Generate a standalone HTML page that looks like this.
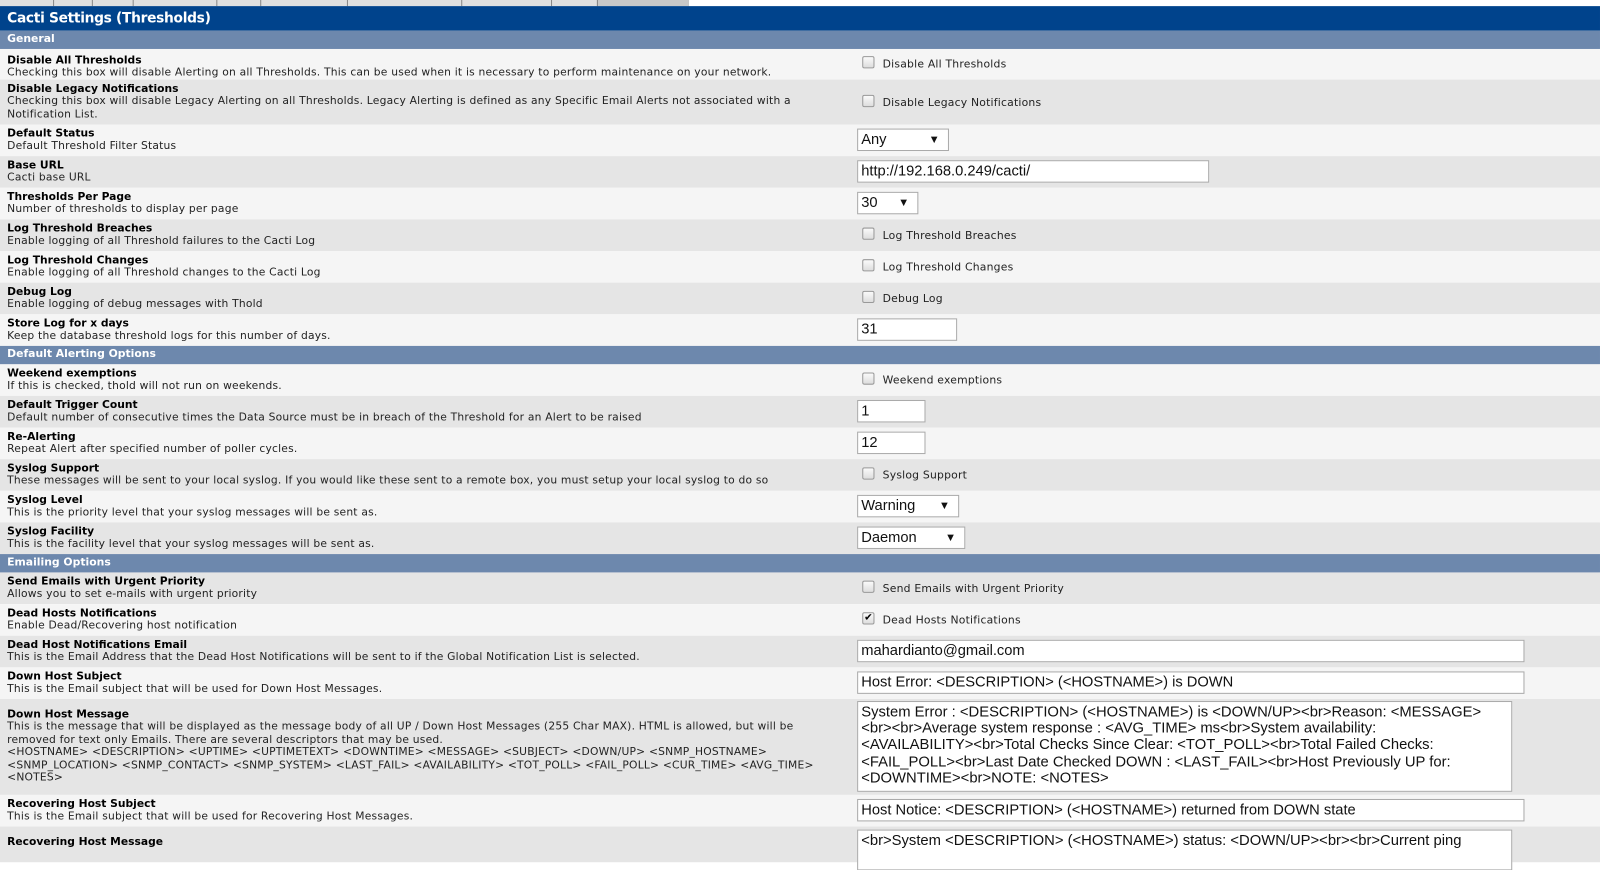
<!DOCTYPE html>
<html><head><meta charset="utf-8"><style>
*{box-sizing:border-box;margin:0;padding:0}
html,body{width:1600px;height:845px;overflow:hidden;background:#fff}
#w{position:absolute;left:0;top:0;width:1568px;height:829px;transform:scale(1.0204);transform-origin:0 0;font-family:"DejaVu Sans",Verdana,sans-serif}
.tabs{position:absolute;left:0;top:0;width:675px;height:6px;background:#e0e0e0;border-right:1px solid #999}
.tabs i{position:absolute;top:0;height:6px;border-left:1px solid #888}
.hdr{position:absolute;left:0;top:6px;width:1568px;height:24px;background:#00438c;color:#fff;font-weight:bold;font-size:13.5px;padding:4px 7px;letter-spacing:-0.3px}
.sec{position:absolute;left:0;width:1568px;height:18px;background:#6d88ad;color:#fff;font-weight:bold;font-size:10.6px;padding:2px 7px}
.r{position:absolute;left:0;width:1568px;background:#f5f5f5}
.r.d{background:#e5e5e5}
.l{position:absolute;left:7px;top:5px;width:830px;font-size:10.5px;line-height:12.4px;color:#000;letter-spacing:0.2px}
.l b{display:block;font-weight:bold;letter-spacing:0}
.l span{color:#222}
.cb{position:absolute;left:845px;width:12px;height:12px;border:1px solid #999;border-radius:2px;background:linear-gradient(#fafafa,#ddd)}
.cl{position:absolute;left:865px;font-size:10.6px;color:#222;letter-spacing:0.2px}
.in{position:absolute;left:840px;height:22px;border:1px solid #aaa;background:#fff;font-family:"Liberation Sans",Arial,sans-serif;font-size:14.4px;padding:2px 3px;color:#111;white-space:nowrap;overflow:hidden}
.sel::after{content:"▼";position:absolute;right:8px;top:4px;font-size:11px}
.ta{position:absolute;left:840px;width:642px;border:1px solid #aaa;background:#fff;font-family:"Liberation Sans",Arial,sans-serif;font-size:14.5px;line-height:16.2px;padding:2px 3px;color:#111;overflow:hidden;white-space:nowrap}
</style></head><body><div id="w">
<div class="tabs"><i style="left:52px"></i><i style="left:90px"></i><i style="left:130px"></i><i style="left:212px"></i><i style="left:255px"></i><i style="left:340px"></i><i style="left:452px"></i><i style="left:540px"></i><i style="left:585px"></i><i style="left:585px;width:90px;background:#c8c8c8"></i></div>
<div class="hdr">Cacti Settings (Thresholds)</div>
<div class="sec" style="top:30px">General</div>

<div class="r" style="top:48px;height:30px"><div class="l"><b>Disable All Thresholds</b><span>Checking this box will disable Alerting on all Thresholds. This can be used when it is necessary to perform maintenance on your network.</span></div><div class="cb" style="top:7px"></div><div class="cl" style="top:9px">Disable All Thresholds</div></div>
<div class="r d" style="top:78px;height:44px"><div class="l" style="top:3px"><b>Disable Legacy Notifications</b><span>Checking this box will disable Legacy Alerting on all Thresholds. Legacy Alerting is defined as any Specific Email Alerts not associated with a<br>Notification List.</span></div><div class="cb" style="top:15px"></div><div class="cl" style="top:17px">Disable Legacy Notifications</div></div>
<div class="r" style="top:122px;height:31px"><div class="l" style="top:3px"><b>Default Status</b><span>Default Threshold Filter Status</span></div><div class="in sel" style="top:4px;width:90px">Any</div></div>
<div class="r d" style="top:153px;height:31px"><div class="l" style="top:3px"><b>Base URL</b><span>Cacti base URL</span></div><div class="in" style="top:4px;width:345px">http://192.168.0.249/cacti/</div></div>
<div class="r" style="top:184px;height:31px"><div class="l" style="top:3px"><b>Thresholds Per Page</b><span>Number of thresholds to display per page</span></div><div class="in sel" style="top:4px;width:60px">30</div></div>
<div class="r d" style="top:215px;height:31px"><div class="l" style="top:3px"><b>Log Threshold Breaches</b><span>Enable logging of all Threshold failures to the Cacti Log</span></div><div class="cb" style="top:8px"></div><div class="cl" style="top:10px">Log Threshold Breaches</div></div>
<div class="r" style="top:246px;height:31px"><div class="l" style="top:3px"><b>Log Threshold Changes</b><span>Enable logging of all Threshold changes to the Cacti Log</span></div><div class="cb" style="top:8px"></div><div class="cl" style="top:10px">Log Threshold Changes</div></div>
<div class="r d" style="top:277px;height:31px"><div class="l" style="top:3px"><b>Debug Log</b><span>Enable logging of debug messages with Thold</span></div><div class="cb" style="top:8px"></div><div class="cl" style="top:10px">Debug Log</div></div>
<div class="r" style="top:308px;height:31px"><div class="l" style="top:3px"><b>Store Log for x days</b><span>Keep the database threshold logs for this number of days.</span></div><div class="in" style="top:4px;width:98px">31</div></div>

<div class="sec" style="top:339px">Default Alerting Options</div>
<div class="r" style="top:357px;height:31px"><div class="l" style="top:3px"><b>Weekend exemptions</b><span>If this is checked, thold will not run on weekends.</span></div><div class="cb" style="top:8px"></div><div class="cl" style="top:10px">Weekend exemptions</div></div>
<div class="r d" style="top:388px;height:31px"><div class="l" style="top:3px"><b>Default Trigger Count</b><span>Default number of consecutive times the Data Source must be in breach of the Threshold for an Alert to be raised</span></div><div class="in" style="top:4px;width:67px">1</div></div>
<div class="r" style="top:419px;height:31px"><div class="l" style="top:3px"><b>Re-Alerting</b><span>Repeat Alert after specified number of poller cycles.</span></div><div class="in" style="top:4px;width:67px">12</div></div>
<div class="r d" style="top:450px;height:31px"><div class="l" style="top:3px"><b>Syslog Support</b><span>These messages will be sent to your local syslog. If you would like these sent to a remote box, you must setup your local syslog to do so</span></div><div class="cb" style="top:8px"></div><div class="cl" style="top:10px">Syslog Support</div></div>
<div class="r" style="top:481px;height:31px"><div class="l" style="top:3px"><b>Syslog Level</b><span>This is the priority level that your syslog messages will be sent as.</span></div><div class="in sel" style="top:4px;width:100px">Warning</div></div>
<div class="r d" style="top:512px;height:31px"><div class="l" style="top:3px"><b>Syslog Facility</b><span>This is the facility level that your syslog messages will be sent as.</span></div><div class="in sel" style="top:4px;width:106px">Daemon</div></div>

<div class="sec" style="top:543px">Emailing Options</div>
<div class="r d" style="top:561px;height:31px"><div class="l" style="top:3px"><b>Send Emails with Urgent Priority</b><span>Allows you to set e-mails with urgent priority</span></div><div class="cb" style="top:8px"></div><div class="cl" style="top:10px">Send Emails with Urgent Priority</div></div>
<div class="r" style="top:592px;height:31px"><div class="l" style="top:3px"><b>Dead Hosts Notifications</b><span>Enable Dead/Recovering host notification</span></div><div class="cb" style="top:8px;font-size:10px;line-height:9px;text-align:center">✔</div><div class="cl" style="top:10px">Dead Hosts Notifications</div></div>
<div class="r d" style="top:623px;height:31px"><div class="l" style="top:3px"><b>Dead Host Notifications Email</b><span>This is the Email Address that the Dead Host Notifications will be sent to if the Global Notification List is selected.</span></div><div class="in" style="top:4px;width:654px">mahardianto@gmail.com</div></div>
<div class="r" style="top:654px;height:31px"><div class="l" style="top:3px"><b>Down Host Subject</b><span>This is the Email subject that will be used for Down Host Messages.</span></div><div class="in" style="top:4px;width:654px">Host Error: &lt;DESCRIPTION&gt; (&lt;HOSTNAME&gt;) is DOWN</div></div>
<div class="r d" style="top:685px;height:94px"><div class="l" style="top:9px"><b>Down Host Message</b><span>This is the message that will be displayed as the message body of all UP / Down Host Messages (255 Char MAX). HTML is allowed, but will be<br>removed for text only Emails. There are several descriptors that may be used.<br>&lt;HOSTNAME&gt; &lt;DESCRIPTION&gt; &lt;UPTIME&gt; &lt;UPTIMETEXT&gt; &lt;DOWNTIME&gt; &lt;MESSAGE&gt; &lt;SUBJECT&gt; &lt;DOWN/UP&gt; &lt;SNMP_HOSTNAME&gt;<br>&lt;SNMP_LOCATION&gt; &lt;SNMP_CONTACT&gt; &lt;SNMP_SYSTEM&gt; &lt;LAST_FAIL&gt; &lt;AVAILABILITY&gt; &lt;TOT_POLL&gt; &lt;FAIL_POLL&gt; &lt;CUR_TIME&gt; &lt;AVG_TIME&gt;<br>&lt;NOTES&gt;</span></div><div class="ta" style="top:2px;height:89px">System Error : &lt;DESCRIPTION&gt; (&lt;HOSTNAME&gt;) is &lt;DOWN/UP&gt;&lt;br&gt;Reason: &lt;MESSAGE&gt;<br>&lt;br&gt;&lt;br&gt;Average system response : &lt;AVG_TIME&gt; ms&lt;br&gt;System availability:<br>&lt;AVAILABILITY&gt;&lt;br&gt;Total Checks Since Clear: &lt;TOT_POLL&gt;&lt;br&gt;Total Failed Checks:<br>&lt;FAIL_POLL&gt;&lt;br&gt;Last Date Checked DOWN : &lt;LAST_FAIL&gt;&lt;br&gt;Host Previously UP for:<br>&lt;DOWNTIME&gt;&lt;br&gt;NOTE: &lt;NOTES&gt;</div></div>
<div class="r" style="top:779px;height:31px"><div class="l" style="top:3px"><b>Recovering Host Subject</b><span>This is the Email subject that will be used for Recovering Host Messages.</span></div><div class="in" style="top:4px;width:654px">Host Notice: &lt;DESCRIPTION&gt; (&lt;HOSTNAME&gt;) returned from DOWN state</div></div>
<div class="r d" style="top:810px;height:35px"><div class="l" style="top:9px"><b>Recovering Host Message</b></div><div class="ta" style="top:3px;height:40px">&lt;br&gt;System &lt;DESCRIPTION&gt; (&lt;HOSTNAME&gt;) status: &lt;DOWN/UP&gt;&lt;br&gt;&lt;br&gt;Current ping</div></div>
</div></body></html>
